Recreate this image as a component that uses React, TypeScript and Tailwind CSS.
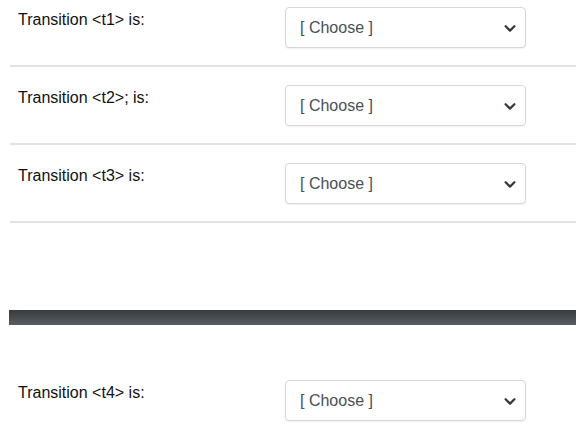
const rows = ["Transition <t1> is:", "Transition <t2>; is:", "Transition <t3> is:"];

function Chevron() {
  return (
    <svg width="14" height="14" viewBox="0 0 16 16" fill="none" stroke="#343a40" strokeWidth="2.6" strokeLinecap="round" strokeLinejoin="round" aria-hidden="true">
      <path d="M3 6l5 5 5-5" />
    </svg>
  );
}

function ChooseSelect() {
  return (
    <div className="flex h-[41px] w-[241px] shrink-0 items-center justify-between rounded-[4px] border border-[#d4d7da] bg-white pl-[14px] pr-[8px] shadow-[0_1px_2px_rgba(0,0,0,0.06)]">
      <span className="text-[16px] text-[#495057]">[ Choose ]</span>
      <Chevron />
    </div>
  );
}

function Label({ text }: { text: string }) {
  return <p className="w-[275px] shrink-0 pl-[8px] pt-[3px] text-[16px] leading-[20px] text-[#111]">{text}</p>;
}

function QuestionRow({ label, first }: { label: string; first?: boolean }) {
  return (
    <div className={`flex items-start border-b-2 border-[#e3e3e3] pb-[17px] ${first ? "pt-[7px]" : "pt-[18px]"}`}>
      <Label text={label} />
      <ChooseSelect />
    </div>
  );
}

export default function App() {
  return (
    <div className="h-[439px] w-[576px] overflow-hidden bg-white font-['Liberation_Sans',Arial,sans-serif]">
      <div className="pl-[10px]">
        {rows.map((r, i) => (
          <QuestionRow key={r} label={r} first={i === 0} />
        ))}
      </div>
      <div className="mt-[87px] ml-[9px] h-[15px] bg-[linear-gradient(180deg,#363b3e_0%,#4a5053_60%,#585f61_100%)]" />
      <div className="flex items-start pl-[10px] pt-[55px]">
        <Label text="Transition <t4> is:" />
        <ChooseSelect />
      </div>
    </div>
  );
}
